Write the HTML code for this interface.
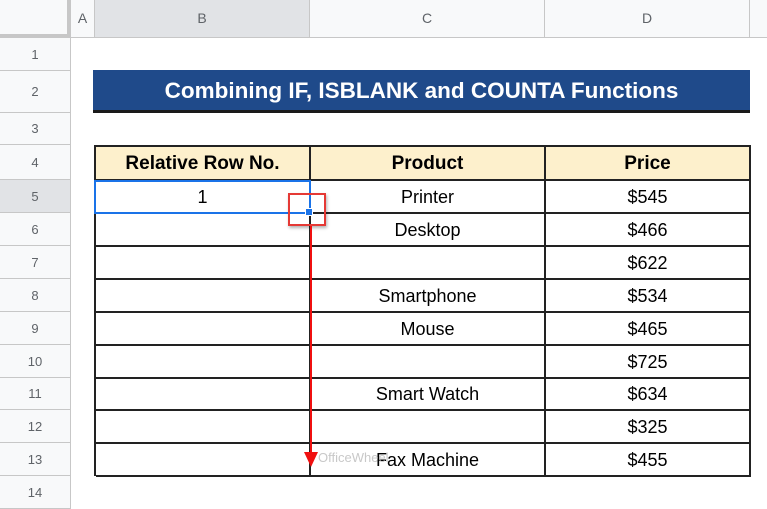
<!DOCTYPE html>
<html><head><style>
body{margin:0;width:767px;height:494px;overflow:hidden;background:#fff;font-family:"Liberation Sans",Arial,sans-serif;position:relative}
.a{position:absolute;box-sizing:border-box}
.ch{background:#f8f9fa;border-right:1px solid #c7c7c7;border-bottom:1px solid #c7c7c7;color:#5f6368;font-size:14px;text-align:center;line-height:37px;top:0;height:38px}
.rh{left:0;width:71px;background:#f8f9fa;border-right:1px solid #c7c7c7;border-bottom:1px solid #c7c7c7;color:#5f6368;font-size:13px;text-align:center}
.c{font-size:18px;color:#000;text-align:center;border-right:2px solid #222;border-bottom:2px solid #222}
</style></head><body>
<div class="a ch" style="left:0;width:71px;border-right:4px solid #c7c7c7;border-bottom:4px solid #c7c7c7"></div>
<div class="a ch" style="left:71px;width:24px">A</div>
<div class="a ch" style="left:95px;width:215px;background:#e1e3e6">B</div>
<div class="a ch" style="left:310px;width:235px">C</div>
<div class="a ch" style="left:545px;width:205px">D</div>
<div class="a ch" style="left:750px;width:17px;border-right:none"></div>
<div id="rows"></div>
<div class="a" style="left:93px;top:70px;width:657px;height:43px;background:#1f4a8a;border-bottom:3px solid #1a1a1a;color:#fff;font-weight:bold;font-size:22.5px;text-align:center;line-height:42px">Combining IF, ISBLANK and COUNTA Functions</div>
<div class="a" style="left:94px;top:145px;width:657px;height:331px;border-left:2px solid #222;border-top:2px solid #222"></div>
<div id="tbl"></div>
<div class="a" style="left:94px;top:180px;width:217px;height:34px;border:2px solid #1a73e8"></div>
<div class="a" style="left:305px;top:208px;width:8px;height:8px;background:#1a73e8;border:1px solid #fff"></div>
<div class="a" style="left:288px;top:193px;width:38px;height:33px;border:2px solid #e53935;box-shadow:1px 2px 3px rgba(0,0,0,.3)"></div>
<div class="a" style="left:310px;top:226px;width:2px;height:230px;background:#f01010"></div>
<svg class="a" style="left:304px;top:452px" width="14" height="16"><polygon points="0,0 14,0 7,15" fill="#f01010"/></svg>
<div class="a" style="left:318px;top:450px;font-size:13px;color:#bbb;opacity:.8">OfficeWheel</div>
<script>
var tops=[38,71,113,145,180,213,246,279,312,345,378,410,443,476,509];
var h='';
for(var i=0;i<14;i++){var t=tops[i],hh=tops[i+1]-t;
h+='<div class="a rh" style="top:'+t+'px;height:'+hh+'px;line-height:'+hh+'px;'+(i==4?'background:#e1e3e6;':'')+'">'+(i+1)+'</div>';}
document.getElementById('rows').innerHTML=h;
var data=[["Relative Row No.","Product","Price"],["1","Printer","$545"],["","Desktop","$466"],["","","$622"],["","Smartphone","$534"],["","Mouse","$465"],["","","$725"],["","Smart Watch","$634"],["","","$325"],["","Fax Machine","$455"]];
var cols=[[96,311],[311,546],[546,751]];var t2='';
for(var r=0;r<10;r++){var t=(r==0?147:tops[r+3]+1),b=tops[r+4];
for(var c=0;c<3;c++){var st='left:'+cols[c][0]+'px;top:'+t+'px;width:'+(cols[c][1]-cols[c][0])+'px;height:'+(b-t+1)+'px;line-height:'+(b-t)+'px;';
if(r==0)st+='background:#fdf0cc;font-weight:bold;font-size:19px;';
t2+='<div class="a c" style="'+st+'">'+data[r][c]+'</div>';}}
document.getElementById('tbl').innerHTML=t2;
</script>
</body></html>
